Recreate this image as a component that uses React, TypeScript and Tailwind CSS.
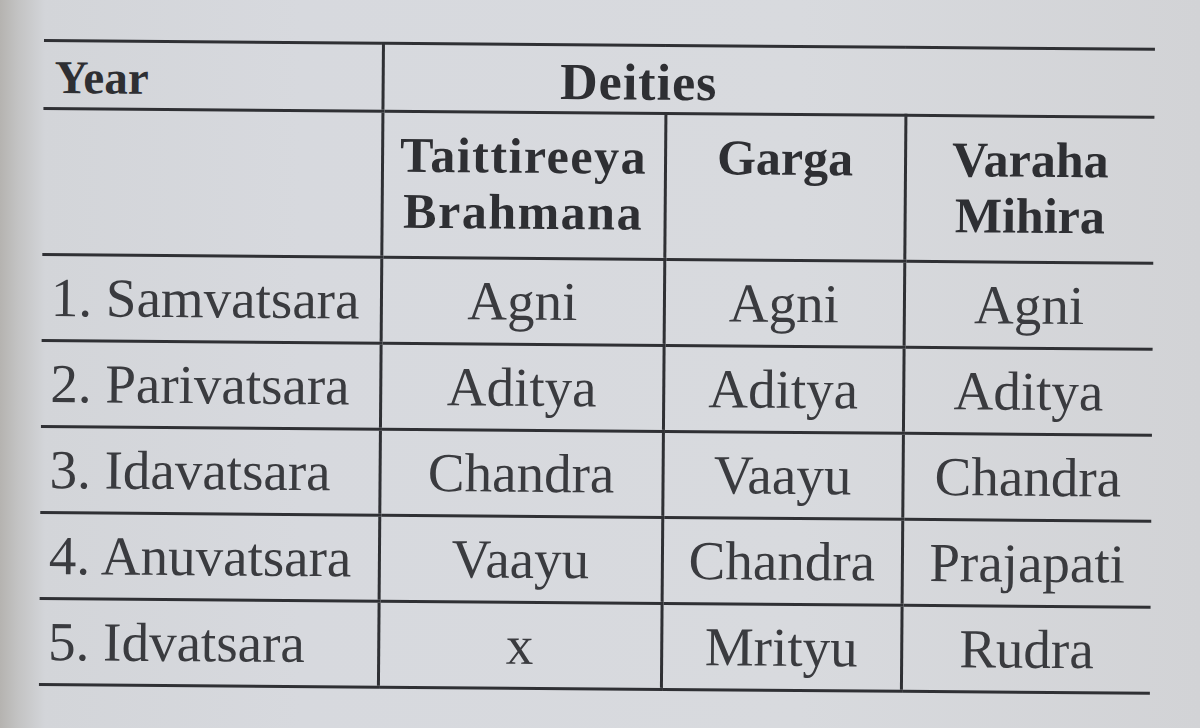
import React from 'react'

const rows = [
  ['1. Samvatsara', 'Agni', 'Agni', 'Agni'],
  ['2. Parivatsara', 'Aditya', 'Aditya', 'Aditya'],
  ['3. Idavatsara', 'Chandra', 'Vaayu', 'Chandra'],
  ['4. Anuvatsara', 'Vaayu', 'Chandra', 'Prajapati'],
  ['5. Idvatsara', 'x', 'Mrityu', 'Rudra'],
]

const rule = 'border-b-[3px] border-[#2f3034]'
const vline = 'border-l-[3px] border-[#2f3034]'

export default function App() {
  return (
    <div className="h-[728px] w-[1200px] overflow-hidden bg-[linear-gradient(to_right,#b5b3b0_0px,#c3c3c3_18px,#d3d5d9_45px,#d7d9de_300px,#d8dade_800px,#d2d3d6_1200px)] font-['Liberation_Serif',serif] text-[#3a3b3f]">
      <div className="pl-[44px] pt-[39px]">
        <table className="w-[1111px] origin-top-left rotate-[0.45deg] table-fixed border-collapse">
          <colgroup>
            <col className="w-[339px]" />
            <col className="w-[283px]" />
            <col className="w-[240px]" />
            <col className="w-[249px]" />
          </colgroup>
          <thead>
            <tr className="h-[68px] border-t-[3px] border-[#2f3034]">
              <th className={`${rule} pl-[11px] text-left align-middle text-[47px] font-bold leading-none text-[#2e2f33]`}>
                <span className="relative top-[3px]">Year</span>
              </th>
              <th
                colSpan={3}
                className={`${rule} ${vline} pl-[176px] text-left align-middle text-[52px] font-bold leading-none tracking-[1px] text-[#2e2f33]`}
              >
                <span className="relative top-[3px]">Deities</span>
              </th>
            </tr>
            <tr className="h-[146px]">
              <th className={rule}></th>
              <th className={`${rule} ${vline} pt-[14px] align-top text-[50px] font-bold leading-[56px] tracking-[1.5px] text-[#2e2f33]`}>
                Taittireeya
                <br />
                Brahmana
              </th>
              <th className={`${rule} ${vline} pt-[14px] align-top text-[50px] font-bold leading-[56px] text-[#2e2f33]`}>
                Garga
              </th>
              <th className={`${rule} ${vline} pt-[14px] align-top text-[50px] font-bold leading-[56px] text-[#2e2f33]`}>
                Varaha
                <br />
                Mihira
              </th>
            </tr>
          </thead>
          <tbody>
            {rows.map((r, i) => (
              <tr key={i} className="h-[86px]">
                <td className={`${rule} pl-[9px] text-left align-middle text-[55px] leading-none`}>{r[0]}</td>
                <td className={`${rule} ${vline} text-center align-middle text-[55px] leading-none`}>{r[1]}</td>
                <td className={`${rule} ${vline} text-center align-middle text-[55px] leading-none`}>{r[2]}</td>
                <td className={`${rule} ${vline} text-center align-middle text-[55px] leading-none`}>{r[3]}</td>
              </tr>
            ))}
          </tbody>
        </table>
      </div>
    </div>
  )
}
